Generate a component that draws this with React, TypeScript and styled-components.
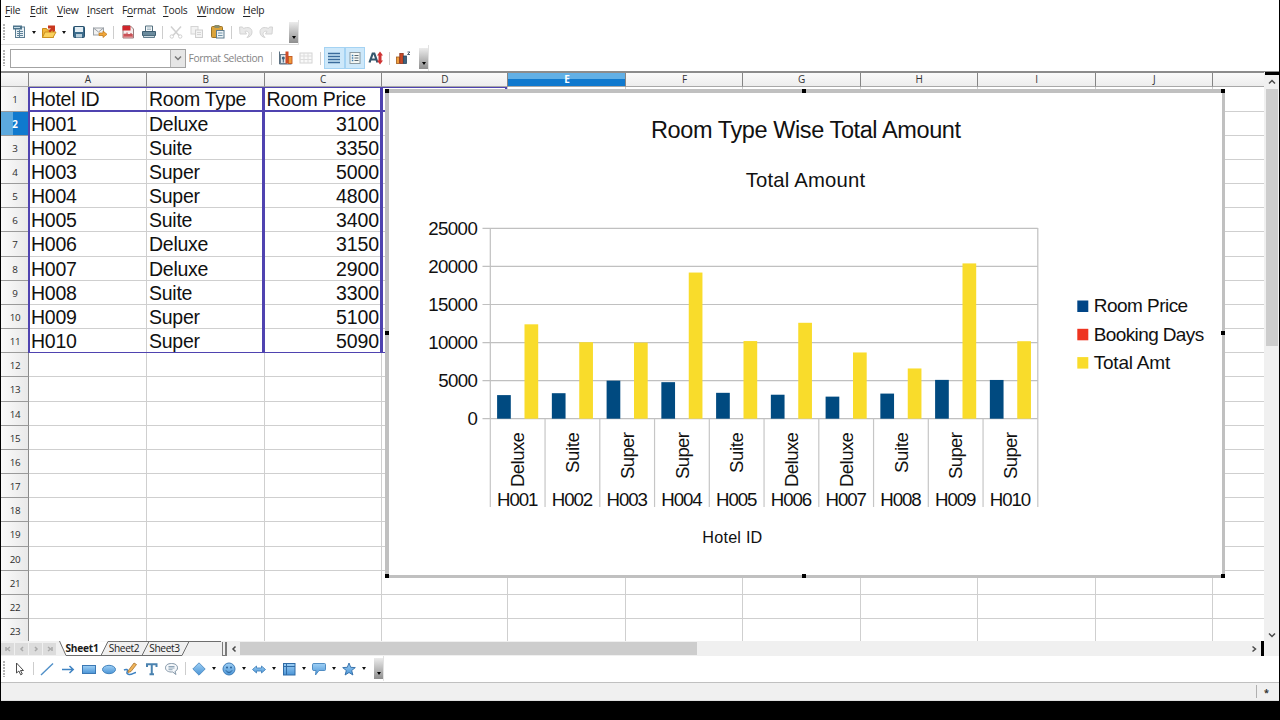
import React from "react";
import styled, { createGlobalStyle, css } from "styled-components";

const GlobalStyle = createGlobalStyle`
  * { box-sizing: border-box; }
  html, body { margin: 0; padding: 0; background: #000; overflow: hidden; }
`;

const uiFont = `"Open Sans", "Noto Sans", sans-serif`;
const docFont = `"Liberation Sans", Arial, sans-serif`;

/* ---------- window ---------- */

const Desktop = styled.div`
  width: 1280px;
  height: 720px;
  padding: 0 1px;
  background: #000;
`;

const AppWindow = styled.div`
  height: 701px;
  display: flex;
  flex-direction: column;
  background: #fff;
  color: #1c1c1c;
  font-family: ${uiFont};
  overflow: hidden;
`;

const MenuBar = styled.nav`
  height: 20px;
  padding-left: 4px;
  display: flex;
  align-items: center;
`;

const MenuItem = styled.span<{ $w: number }>`
  width: ${(p) => p.$w}px;
  font-size: 10.3px;
  line-height: 18px;
  letter-spacing: -0.22px;
  white-space: nowrap;
  color: #222;
`;

const Mnemonic = styled.span`
  text-decoration: underline;
  text-underline-offset: 1.5px;
  text-decoration-thickness: 1px;
`;

/* ---------- toolbars ---------- */

const Toolbar = styled.div<{ $h: number; $w: number; $line?: boolean }>`
  height: ${(p) => p.$h}px;
  width: ${(p) => p.$w}px;
  flex: none;
  display: flex;
  align-items: center;
  border-right: 1px solid #e2e2e2;
  ${(p) => p.$line && css`border-bottom: 1px solid #dcdcdc;`}
`;

const Grip = styled.span<{ $w?: number }>`
  width: ${(p) => p.$w ?? 8.1}px;
  height: 16px;
  flex: none;
  background: radial-gradient(circle at 1px 1px, #b4b4b4 0.8px, transparent 1.1px) 2px 0 / 5px 3px repeat-y;
`;

const Tool = styled.span<{ $off?: boolean; $on?: boolean }>`
  width: 20.7px;
  height: 22px;
  flex: none;
  display: flex;
  align-items: center;
  justify-content: center;
  opacity: ${(p) => (p.$off ? 0.7 : 1)};
  ${(p) => p.$on && css`
    background: #cde8fa;
    border: 1px solid #a5d3f3;
  `}
`;

const Caret = styled.span`
  width: 9.3px;
  flex: none;
  display: flex;
  justify-content: center;
  &::before {
    content: "";
    border: 2.5px solid transparent;
    border-top: 3px solid #111;
    border-bottom: 0;
  }
`;

const Separator = styled.span`
  width: 7.1px;
  height: 13px;
  flex: none;
  background: linear-gradient(#cdcdcd, #cdcdcd) center / 1px 100% no-repeat;
`;

const Overflow = styled.span`
  width: 9px;
  height: 21px;
  margin-left: auto;
  flex: none;
  display: flex;
  align-items: flex-end;
  justify-content: center;
  padding-bottom: 4px;
  background: linear-gradient(#ececec, #8e8e8e);
  &::before {
    content: "";
    border: 2.5px solid transparent;
    border-top: 3px solid #000;
    border-bottom: 0;
  }
`;

const Combo = styled.div`
  width: 176px;
  height: 19px;
  flex: none;
  display: flex;
  justify-content: flex-end;
  border: 1px solid #a3a3a3;
  background: #fff;
`;

const ComboButton = styled.span`
  width: 15px;
  display: flex;
  align-items: center;
  justify-content: center;
  background: #e6e6e6;
  border-left: 1px solid #b4b4b4;
`;

const FormatLabel = styled.span`
  width: 82.3px;
  flex: none;
  padding-left: 2.5px;
  font-size: 10.3px;
  line-height: 18px;
  letter-spacing: -0.43px;
  word-spacing: 0.6px;
  color: #858585;
  white-space: nowrap;
`;

/* ---------- sheet ---------- */

const Workspace = styled.div`
  height: 570px;
  flex: none;
  display: flex;
  position: relative;
`;

const Sheet = styled.div`
  width: 1263px;
  height: 570px;
  flex: none;
  overflow: hidden;
  border-top: 2px solid #8c8c8c;
`;

const TRACKS = "28px 118px 117.5px 117.5px 126px 118px 117px 117.5px 117.5px 117.5px 117.5px 51px";

const HeaderRow = styled.div`
  display: grid;
  grid-template-columns: ${TRACKS};
  grid-template-rows: 100%;
  height: 14.4px;
`;

const ColumnHead = styled.div<{ $active?: boolean }>`
  border-right: 1px solid #858585;
  border-bottom: 1px solid #a8a8a8;
  background: ${(p) => (p.$active ? "linear-gradient(#62b0e6 0 45%, #0f79ce 45%)" : "linear-gradient(#fafafa, #ededed)")};
  color: ${(p) => (p.$active ? "#fff" : "#333")};
  font-weight: ${(p) => (p.$active ? 700 : 400)};
  font-size: 10px;
  line-height: 13px;
  padding-left: 1px;
  text-align: center;
  &:last-child { border-right: 0; }
`;

const Row = styled.div`
  display: grid;
  grid-template-columns: ${TRACKS};
  grid-template-rows: 100%;
  height: 24.18px;
`;

const RowHead = styled.div<{ $active?: boolean }>`
  border-right: 1px solid #8a8a8a;
  border-bottom: 1px solid #9a9a9a;
  background: ${(p) => (p.$active ? "linear-gradient(90deg, #5ca9de 0 46%, #0f79ce 46%)" : "linear-gradient(90deg, #fafafa, #e9e9e9)")};
  color: ${(p) => (p.$active ? "#fff" : "#2c2c2c")};
  font-weight: ${(p) => (p.$active ? 700 : 400)};
  font-size: 9.8px;
  line-height: 25px;
  letter-spacing: -0.3px;
  padding-left: 1px;
  text-align: center;
`;

const Cell = styled.div<{ $num?: boolean }>`
  border-right: 1px solid #cfcfcf;
  border-bottom: 1px solid #cfcfcf;
  padding: 0 2px;
  font-family: ${docFont};
  font-size: 19.5px;
  line-height: 24.6px;
  letter-spacing: ${(p) => (p.$num ? -0.1 : -0.25)}px;
  text-align: ${(p) => (p.$num ? "right" : "left")};
  color: #111;
  white-space: nowrap;
  &:last-child { border-right: 0; }
`;

const RangeOutline = styled.div<{ $x: number; $y: number; $w: number; $h: number }>`
  position: absolute;
  left: ${(p) => p.$x}px;
  top: ${(p) => p.$y}px;
  width: ${(p) => p.$w}px;
  height: ${(p) => p.$h}px;
  border: 1px solid #4f43b0;
  border-left-width: 2px;
  border-right-width: 2px;
`;

/* ---------- chart object ---------- */

const ChartFrame = styled.div`
  position: absolute;
  left: 384px;
  top: 18px;
  width: 840px;
  height: 489px;
  background: #fff;
  border: 4px solid #c0c0c0;
  border-right-width: 3px;
  border-bottom-width: 3px;
`;

const Handle = styled.i<{ $x: number; $y: number }>`
  position: absolute;
  left: ${(p) => p.$x}px;
  top: ${(p) => p.$y}px;
  width: 4px;
  height: 4px;
  background: #000;
`;

const ChartCanvas = styled.svg`
  display: block;
  font-family: ${docFont};
  fill: #111;
`;

/* ---------- scrollbars & tabs ---------- */

const VScroll = styled.div`
  width: 15px;
  height: 585px;
  flex: none;
  display: flex;
  flex-direction: column;
  align-items: center;
  background: #f0f0f0;
  border-top: 1px solid #8c8c8c;
  z-index: 1;
`;

const SplitTop = styled.div`
  width: 14px;
  height: 3px;
  flex: none;
  background: #000;
`;

const ScrollArrow = styled.div<{ $h: number }>`
  height: ${(p) => p.$h}px;
  flex: none;
  display: flex;
  align-items: center;
`;

const VThumb = styled.div`
  width: 12px;
  height: 257px;
  flex: none;
  background: #cdcdcd;
`;

const VTrack = styled.div`
  flex: 1;
`;

const TabStrip = styled.div`
  height: 15px;
  width: 1263px;
  flex: none;
  display: flex;
  align-items: center;
  background: #f0f0f0;
`;

const NavButton = styled.span`
  width: 13px;
  height: 12px;
  margin-right: 1px;
  flex: none;
  display: flex;
  align-items: center;
  justify-content: center;
  background: #dcdcdc;
`;

const TabsArea = styled.div`
  position: relative;
  width: 165px;
  height: 15px;
  flex: none;
  display: flex;
`;

const TabShapes = styled.svg`
  position: absolute;
  inset: 0;
`;

const TabLabel = styled.span<{ $w: number; $bold?: boolean }>`
  position: relative;
  width: ${(p) => p.$w}px;
  font-size: 10.2px;
  line-height: 15px;
  letter-spacing: ${(p) => (p.$bold ? -0.25 : -0.4)}px;
  text-align: center;
  font-weight: ${(p) => (p.$bold ? 700 : 400)};
  color: #1a1a1a;
`;

const SplitHandle = styled.span`
  width: 5px;
  height: 14px;
  flex: none;
  border: 1px solid #7b7b7b;
  border-width: 0 2px 1px 1px;
`;

const HArrow = styled.span<{ $w: number }>`
  width: ${(p) => p.$w}px;
  flex: none;
  display: flex;
  align-items: center;
  justify-content: center;
`;

const HThumb = styled.div`
  width: 457px;
  height: 13px;
  flex: none;
  background: #cdcdcd;
`;

const HSpace = styled.div`
  flex: 1;
`;

const SplitEnd = styled.span`
  width: 3px;
  height: 15px;
  flex: none;
  background: #000;
`;

const StatusBar = styled.footer`
  height: 19px;
  flex: none;
  display: flex;
  justify-content: flex-end;
  align-items: center;
  background: #f0f0f0;
  border-top: 1px solid #c0c0c0;
  border-bottom: 1px solid #dedede;
`;

const StatusCell = styled.span`
  width: 23px;
  height: 13px;
  border-left: 1px solid #b0b0b0;
  font-size: 9px;
  font-weight: 700;
  line-height: 15px;
  padding-left: 7px;
  color: #333;
`;

const DrawBar = styled.div`
  height: 26px;
  flex: none;
  display: flex;
`;

/* ---------- icons ---------- */

const Ico = ({ children }: { children: React.ReactNode }) => (
  <svg width="16" height="16" viewBox="0 0 16 16" fill="none">{children}</svg>
);

const Chevron = ({ d, c = "#4a4a4a" }: { d: string; c?: string }) => (
  <svg width="8" height="8" viewBox="0 0 8 8" fill="none" stroke={c} strokeWidth="1.5"><path d={d} /></svg>
);
const UP = "M1 5.5 4 2.5 7 5.5";
const DOWN = "M1 2.5 4 5.5 7 2.5";
const LEFT = "M5.5 1.5 3 4 5.5 6.5";
const RIGHT = "M2.5 1.5 5.5 4 2.5 6.5";

const icons = {
  newDoc: (
    <Ico>
      <rect x="4.5" y="3" width="9" height="10.5" fill="#e9f1f6" stroke="#5b7d92" />
      <rect x="2" y="1.5" width="9" height="4" fill="#4e758c" />
      <path d="M6 7.5h6M6 9.5h6M6 11.5h6M8.5 6v7" stroke="#5f8298" />
      <path d="M3 3.5h6" stroke="#c6dbe7" />
    </Ico>
  ),
  open: (
    <Ico>
      <path d="M1.5 13.5V4.5h4l1 1.5h6v7.5z" fill="#f1b63a" stroke="#c98a1a" />
      <path d="M1.5 13.5 4 8h11l-3 5.5z" fill="#fbd25e" stroke="#cc911f" />
      <path d="M7 1.5h7v6h-2.500V6L9 8.500 7.500 7 10 4.500H7z" fill="#c8371f" />
    </Ico>
  ),
  save: (
    <Ico>
      <rect x="2.500" y="2.500" width="11" height="11" rx="1" fill="#3c6c8c" stroke="#28506c" />
      <rect x="4" y="3" width="8" height="5" fill="#e3edf3" />
      <rect x="5" y="10" width="6" height="3.500" fill="#b9cfdc" />
    </Ico>
  ),
  mail: (
    <Ico>
      <rect x="1.500" y="4" width="10" height="7" fill="#f1f1f1" stroke="#9aa0a6" />
      <path d="M1.500 4 6.500 8 11.500 4" stroke="#9aa0a6" />
      <path d="M7 9h4V7l4 3.300-4 3.200v-2H7z" fill="#f0a63a" stroke="#c07714" strokeWidth=".7" />
    </Ico>
  ),
  pdf: (
    <Ico>
      <path d="M3 1.500h7l3.500 3.500v9H3z" fill="#f6eeee" stroke="#9a7c7c" />
      <rect x="2.500" y="2" width="8" height="4.500" fill="#d0262c" />
      <path d="M3 10h10v3.500H3z" fill="#d9777a" />
      <path d="M5 12V9.500M7 12V8.500M9 12v-2M11 12V9" stroke="#b82c32" />
    </Ico>
  ),
  print: (
    <Ico>
      <path d="M4.500 7V2h7v5" fill="#f5f8fa" stroke="#55707f" />
      <path d="M1.500 7.500h13v4h-13z" fill="#6b8b9d" stroke="#3f5f72" />
      <path d="M2.500 11.500h11v2h-11z" fill="#cfdde5" stroke="#3f5f72" strokeWidth=".8" />
      <path d="M6 4h4M6 5.500h4" stroke="#8ea6b3" strokeWidth=".7" />
    </Ico>
  ),
  cut: (
    <Ico>
      <path d="M3 2.500 11 11.500M13 2.500 5 11.500" stroke="#bdbdbd" strokeWidth="1.500" />
      <circle cx="3.800" cy="12.500" r="1.700" stroke="#bdbdbd" />
      <circle cx="12.200" cy="12.500" r="1.700" stroke="#bdbdbd" />
    </Ico>
  ),
  copy: (
    <Ico>
      <rect x="2" y="2.500" width="7" height="7.500" fill="#eee" stroke="#c4c4c4" />
      <rect x="6.500" y="6" width="7" height="7.500" fill="#eee" stroke="#bcbcbc" />
      <path d="M8 8.500h4M8 10.500h4" stroke="#c4c4c4" />
    </Ico>
  ),
  paste: (
    <Ico>
      <rect x="1.500" y="2.500" width="11" height="11" rx="1" fill="#dba43c" stroke="#9a7328" />
      <rect x="4.500" y="1" width="5" height="3" fill="#8b8d6a" />
      <rect x="6.500" y="6.500" width="7.500" height="7.500" fill="#eef3f6" stroke="#5f7d8f" />
      <path d="M8 9h4.500M8 11.500h4.500" stroke="#6f93a8" />
    </Ico>
  ),
  undo: (
    <Ico>
      <path d="M1.500 3h3l1 1.500c4-2 8.500-1 8.500 3.500 0 3-2 5-5 5.500 2-2 2.500-3.500 1.500-5S8 7 7 7.500L8.500 10H2z" fill="#e0e0e0" stroke="#c2c2c2" />
    </Ico>
  ),
  redo: (
    <Ico>
      <path d="M14.500 3h-3l-1 1.500C6.500 2.500 2 3.500 2 8c0 3 2 5 5 5.500-2-2-2.500-3.500-1.500-5S8 7 9 7.500L7.500 10H14z" fill="#e0e0e0" stroke="#c2c2c2" />
    </Ico>
  ),
  chartType: (
    <Ico>
      <path d="M1.500 1.500v12.500h12" stroke="#5a6f80" />
      <rect x="2.500" y="4.500" width="6" height="9" fill="#dfe6ec" stroke="#6a7f90" />
      <circle cx="5.300" cy="8" r="1.500" fill="#41617b" />
      <path d="M5.300 9v3.500" stroke="#41617b" />
      <rect x="7.500" y="1.500" width="3" height="12" fill="#cf4b27" />
      <rect x="10.500" y="6.500" width="3.500" height="7" fill="#f09a3c" stroke="#c2571f" strokeWidth=".9" />
    </Ico>
  ),
  table: (
    <Ico>
      <rect x="2" y="3" width="12" height="10" fill="#f7f7f7" stroke="#c2c2c2" />
      <path d="M2 6h12M2 9.500h12M6 3v10M10 3v10" stroke="#cfcfcf" />
    </Ico>
  ),
  hgrid: (
    <Ico>
      <path d="M2 3.500h12M2 6.500h12M2 9.500h12M2 12.500h12" stroke="#3b6c9c" strokeWidth="1.300" />
    </Ico>
  ),
  legend: (
    <Ico>
      <rect x="3" y="2.500" width="10" height="11" fill="#f4f7f4" stroke="#8a9aa2" />
      <path d="M7.500 5.500h4M7.500 8h4M7.500 10.500h4" stroke="#5a6a74" />
      <path d="M4.800 5.500h1.500M4.800 8h1.500M4.800 10.500h1.500" stroke="#3b7cb0" strokeWidth="1.300" />
    </Ico>
  ),
  scaleText: (
    <Ico>
      <path d="M1.500 12.500 4.700 3.500h1.600l3.200 9M3 9.500h5.500" stroke="#34566c" strokeWidth="2.200" />
      <path d="M12 1.500 15 5.500h-1.500v5H15l-3 4-3-4h1.500v-5H9z" fill="#cf3434" />
    </Ico>
  ),
  autoLayout: (
    <Ico>
      <rect x="1.500" y="7" width="3" height="6.500" fill="#f0a040" stroke="#a05a1c" strokeWidth=".8" />
      <rect x="4.800" y="3.500" width="3.400" height="10" fill="#c84a2a" stroke="#8c3018" strokeWidth=".8" />
      <rect x="8.500" y="6" width="3" height="7.500" fill="#3e6380" stroke="#2b475e" strokeWidth=".8" />
      <path d="M12.500 2h2.500l-2.500 2.500h2.500" stroke="#456" strokeWidth=".9" />
    </Ico>
  ),
  pointer: (
    <Ico>
      <path d="M4.500 2v10l2.400-2 1.800 3.800 1.600-.8-1.800-3.500h3z" fill="#fff" stroke="#4c4c4c" />
    </Ico>
  ),
  line: <Ico><path d="M2 14 14 2.500" stroke="#4f8fc8" strokeWidth="1.400" /></Ico>,
  arrow: <Ico><path d="M2 8.500h11M9.500 5l3.700 3.500-3.700 3.500" stroke="#3f83c2" strokeWidth="1.500" /></Ico>,
  rect: <Ico><rect x="1.500" y="4.500" width="13" height="8" fill="url(#blue)" stroke="#3b78b4" /></Ico>,
  ellipse: <Ico><ellipse cx="8" cy="8.500" rx="6.500" ry="4.200" fill="url(#blue)" stroke="#4584bd" /></Ico>,
  pen: (
    <Ico>
      <path d="M2 9c2-1 4-.5 3.500 1S4 13 7 13.500s5-2 7-2" stroke="#3f83c2" strokeWidth="1.600" />
      <path d="M6 10 12 2l2.500 1.500L9 10.500 6 11.500z" fill="#f0b45a" stroke="#a8722c" strokeWidth=".8" />
    </Ico>
  ),
  text: <Ico><path d="M4 6V3.300h9.500V6M8.750 3.500v10M6.500 13.300h4.500" stroke="#4a82b0" strokeWidth="2" /></Ico>,
  note: (
    <Ico>
      <path d="M8.500 2.500c3.800 0 6 1.800 6 4.300 0 2-1 3-2.500 3.700l1 3-3.300-2.500c-4.200.3-7.200-1.200-7.200-4.200 0-2.500 2.200-4.300 6-4.300z" fill="#f4f7fa" stroke="#8497a8" />
      <path d="M5.500 5.500h6M5.500 7h6M5.500 8.700h4" stroke="#8fa5b8" />
    </Ico>
  ),
  diamond: <Ico><path d="M8 1.800 14.200 8 8 14.200 1.800 8z" fill="url(#blue)" stroke="#4584bd" strokeWidth=".8" /></Ico>,
  smile: (
    <Ico>
      <circle cx="8" cy="8" r="6" fill="url(#blue)" stroke="#3f7db8" />
      <path d="M5 9.500c1.500 2.500 4.500 2.500 6 0" stroke="#21598f" />
      <circle cx="6" cy="6.500" r=".9" fill="#21598f" /><circle cx="10" cy="6.500" r=".9" fill="#21598f" />
    </Ico>
  ),
  arrows: (
    <Ico>
      <path d="M1.500 8.500 5.500 5v2h5V5l4 3.500-4 3.500v-2h-5v2z" fill="url(#blue)" stroke="#4584bd" strokeWidth=".9" />
    </Ico>
  ),
  flow: (
    <Ico>
      <rect x="2.500" y="2.500" width="11.500" height="11.500" fill="url(#blue)" stroke="#2f6ba6" />
      <path d="M5.500 2.500v11.500M2.500 5.500H14" stroke="#2f6ba6" />
    </Ico>
  ),
  callout: (
    <Ico>
      <path d="M3 2.500h10.500q1 0 1 1v5q0 1-1 1H8L4.500 14l.5-4.500H3q-1.500 0-1.500-1v-5q0-1 1.500-1z" fill="url(#blue)" stroke="#4584bd" strokeWidth=".9" />
    </Ico>
  ),
  star: (
    <Ico>
      <path d="m8 2 1.700 4.300 4.600.3-3.600 2.900 1.200 4.500L8 11.500 4.100 14l1.200-4.500L1.700 6.600l4.600-.3z" fill="url(#blue)" stroke="#2f6ba6" strokeWidth=".9" />
    </Ico>
  ),
};

const SharedDefs = () => (
  <defs>
    <linearGradient id="blue" x1="0" y1="0" x2="0" y2="1">
      <stop offset="0" stopColor="#9fd0f5" />
      <stop offset="1" stopColor="#4a94d6" />
    </linearGradient>
  </defs>
);

/* ---------- data ---------- */

const menus: [string, string, string, number][] = [
  ["", "F", "ile", 25],
  ["", "E", "dit", 27],
  ["", "V", "iew", 30],
  ["", "I", "nsert", 35],
  ["F", "o", "rmat", 41],
  ["", "T", "ools", 34],
  ["", "W", "indow", 46],
  ["", "H", "elp", 30],
];

const columns = ["A", "B", "C", "D", "E", "F", "G", "H", "I", "J", ""];

const bookings: { id: string; type: string; price: number; total: number }[] = [
  { id: "H001", type: "Deluxe", price: 3100, total: 12400 },
  { id: "H002", type: "Suite", price: 3350, total: 10050 },
  { id: "H003", type: "Super", price: 5000, total: 10000 },
  { id: "H004", type: "Super", price: 4800, total: 19200 },
  { id: "H005", type: "Suite", price: 3400, total: 10200 },
  { id: "H006", type: "Deluxe", price: 3150, total: 12600 },
  { id: "H007", type: "Deluxe", price: 2900, total: 8700 },
  { id: "H008", type: "Suite", price: 3300, total: 6600 },
  { id: "H009", type: "Super", price: 5100, total: 20400 },
  { id: "H010", type: "Super", price: 5090, total: 10180 },
];

const cellText = (row: number, col: number): string => {
  if (row === 1) return ["Hotel ID", "Room Type", "Room Price"][col] ?? "";
  const b = bookings[row - 2];
  if (!b) return "";
  return [b.id, b.type, String(b.price)][col] ?? "";
};

/* ---------- chart ---------- */

const X0 = 490.3;
const Y0 = 418.7;
const STEP = 54.75;
const PER_UNIT = 190.3 / 25000;
const typeLength: Record<string, number> = { Deluxe: 55, Suite: 41, Super: 47 };

const legendItems: [string, string, number][] = [
  ["Room Price", "#004586", 94.5],
  ["Booking Days", "#ee3420", 110.5],
  ["Total Amt", "#f9dc2b", 76.5],
];

const Chart = () => (
  <ChartCanvas width="833" height="482" viewBox="389 93 833 482">
    <text x="651" y="137.700" fontSize="23.500" textLength="310">Room Type Wise Total Amount</text>
    <text x="745.700" y="186.500" fontSize="20.300" textLength="119.500">Total Amount</text>
    {[0, 5000, 10000, 15000, 20000, 25000].map((v) => {
      const y = Y0 - v * PER_UNIT;
      return (
        <g key={v}>
          <path d={`M482.500 ${y}H${X0 + STEP * 10}`} stroke="#c0c0c0" strokeWidth="1.200" />
          <text x="477.800" y={y + 6.500} fontSize="18.700" textAnchor="end" textLength={v === 0 ? 10 : v < 10000 ? 39.5 : 49.5}>{v}</text>
        </g>
      );
    })}
    <path d={`M${X0} 228V${Y0}M${X0 + STEP * 10} 228V${Y0}`} stroke="#c0c0c0" strokeWidth="1.200" />
    {Array.from({ length: 11 }, (_, i) => (
      <path key={i} d={`M${X0 + STEP * i} ${Y0}V507`} stroke="#c6c6c6" strokeWidth="1.200" />
    ))}
    {bookings.map((b, i) => {
      const x = X0 + STEP * i;
      return (
        <g key={b.id}>
          <rect x={x + 6.800} y={Y0 - b.price * PER_UNIT} width="13.700" height={b.price * PER_UNIT} fill="#004a80" />
          <rect x={x + 34.200} y={Y0 - b.total * PER_UNIT} width="13.700" height={b.total * PER_UNIT} fill="#f9dc2b" />
          <text transform={`translate(${x + 34} 432) rotate(-90)`} fontSize="18.700" textAnchor="end" textLength={typeLength[b.type]}>{b.type}</text>
          <text x={x + 27.400} y="506.300" fontSize="18.700" textAnchor="middle" textLength="41.500">{b.id}</text>
        </g>
      );
    })}
    <text x="702.300" y="543" fontSize="16.200" textLength="60">Hotel ID</text>
    {legendItems.map(([name, color, w], i) => (
      <g key={name}>
        <rect x="1077.300" y={300.500 + i * 28.300} width="11" height="11.500" fill={color} />
        <text x="1093.700" y={312.300 + i * 28.300} fontSize="19" textLength={w}>{name}</text>
      </g>
    ))}
  </ChartCanvas>
);

const handles: [number, number][] = [
  [-4, -4], [413, -4], [832, -4],
  [-4, 238], [832, 238],
  [-4, 481], [413, 481], [832, 481],
];

export default function App() {
  return (
    <Desktop>
      <GlobalStyle />
      <AppWindow>
        <MenuBar>
          {menus.map(([pre, key, post, w]) => (
            <MenuItem key={key + post} $w={w}>{pre}<Mnemonic>{key}</Mnemonic>{post}</MenuItem>
          ))}
        </MenuBar>

        <Toolbar $h={25} $w={298} $line>
          <Grip />
          <Tool>{icons.newDoc}</Tool><Caret />
          <Tool>{icons.open}</Tool><Caret />
          <Tool>{icons.save}</Tool>
          <Tool>{icons.mail}</Tool>
          <Separator />
          <Tool>{icons.pdf}</Tool>
          <Tool>{icons.print}</Tool>
          <Separator />
          <Tool $off>{icons.cut}</Tool>
          <Tool $off>{icons.copy}</Tool>
          <Tool>{icons.paste}</Tool>
          <Separator />
          <Tool $off>{icons.undo}</Tool>
          <Tool $off>{icons.redo}</Tool>
          <Overflow />
        </Toolbar>

        <Toolbar $h={26} $w={428}>
          <Grip $w={9} />
          <Combo><ComboButton><Chevron d={DOWN} c="#777" /></ComboButton></Combo>
          <FormatLabel>Format Selection</FormatLabel>
          <Separator />
          <Tool>{icons.chartType}</Tool>
          <Tool $off>{icons.table}</Tool>
          <Separator />
          <Tool $on>{icons.hgrid}</Tool>
          <Tool $on>{icons.legend}</Tool>
          <Tool>{icons.scaleText}</Tool>
          <Separator />
          <Tool>{icons.autoLayout}</Tool>
          <Overflow />
        </Toolbar>

        <Workspace>
          <Sheet>
            <HeaderRow>
              <ColumnHead />
              {columns.map((c) => <ColumnHead key={c} $active={c === "E"}>{c}</ColumnHead>)}
            </HeaderRow>
            {Array.from({ length: 23 }, (_, i) => i + 1).map((r) => (
              <Row key={r}>
                <RowHead $active={r === 2}>{r}</RowHead>
                {columns.map((c, i) => <Cell key={c} $num={i === 2 && r > 1}>{cellText(r, i)}</Cell>)}
              </Row>
            ))}
          </Sheet>
          <RangeOutline $x={27} $y={16} $w={236} $h={24} />
          <RangeOutline $x={262} $y={16} $w={119} $h={24} />
          <RangeOutline $x={380} $y={16} $w={126} $h={24} />
          <RangeOutline $x={27} $y={40} $w={236} $h={242} />
          <RangeOutline $x={262} $y={40} $w={119} $h={242} />
          <RangeOutline $x={380} $y={40} $w={126} $h={242} />
          <ChartFrame>
            <Chart />
            {handles.map(([x, y]) => <Handle key={`${x}-${y}`} $x={x} $y={y} />)}
          </ChartFrame>
          <VScroll>
            <SplitTop />
            <ScrollArrow $h={14}><Chevron d={UP} /></ScrollArrow>
            <VThumb />
            <VTrack />
            <ScrollArrow $h={43}><Chevron d={DOWN} /></ScrollArrow>
          </VScroll>
        </Workspace>

        <TabStrip>
          <NavButton><Chevron d="M6 2 3.500 4 6 6M2 2v4" c="#a8a8a8" /></NavButton>
          <NavButton><Chevron d="M5 2 3 4 5 6" c="#a8a8a8" /></NavButton>
          <NavButton><Chevron d="M3 2 5 4 3 6" c="#a8a8a8" /></NavButton>
          <NavButton><Chevron d="M2 2 4.500 4 2 6M6 2v4" c="#a8a8a8" /></NavButton>
          <TabsArea>
            <TabShapes width="165" height="15" viewBox="0 0 165 15" fill="none" stroke="#6e6e6e">
              <SharedDefs />
              <path d="M2.500 0 9 14.500H44L50 .500z" fill="#fff" stroke="none" />
              <path d="M2.500 0 9 14.500H44L51 .500H92L85 14.500H44M92 .500H132L125 14.500H85M132 .500H164" />
            </TabShapes>
            <TabLabel $w={50} $bold>Sheet1</TabLabel>
            <TabLabel $w={34}>Sheet2</TabLabel>
            <TabLabel $w={47}>Sheet3</TabLabel>
          </TabsArea>
          <SplitHandle />
          <HArrow $w={13}><Chevron d={LEFT} /></HArrow>
          <HThumb />
          <HSpace />
          <HArrow $w={14}><Chevron d={RIGHT} /></HArrow>
          <SplitEnd />
        </TabStrip>

        <DrawBar>
          <Toolbar $h={25} $w={383}>
            <Grip $w={8.2} />
            <Tool>{icons.pointer}</Tool>
            <Separator />
            <Tool>{icons.line}</Tool>
            <Tool>{icons.arrow}</Tool>
            <Tool>{icons.rect}</Tool>
            <Tool>{icons.ellipse}</Tool>
            <Tool>{icons.pen}</Tool>
            <Tool>{icons.text}</Tool>
            <Tool>{icons.note}</Tool>
            <Separator />
            <Tool>{icons.diamond}</Tool><Caret />
            <Tool>{icons.smile}</Tool><Caret />
            <Tool>{icons.arrows}</Tool><Caret />
            <Tool>{icons.flow}</Tool><Caret />
            <Tool>{icons.callout}</Tool><Caret />
            <Tool>{icons.star}</Tool><Caret />
            <Overflow />
          </Toolbar>
        </DrawBar>

        <StatusBar><StatusCell>*</StatusCell></StatusBar>
      </AppWindow>
    </Desktop>
  );
}
